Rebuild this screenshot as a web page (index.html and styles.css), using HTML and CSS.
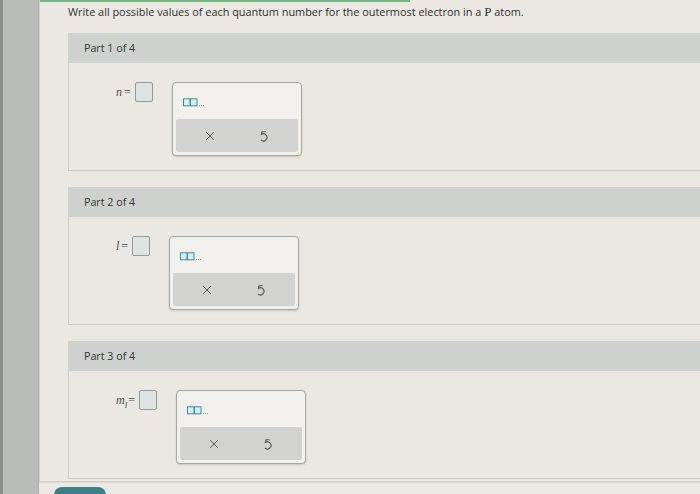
FILE: index.html
```html
<!DOCTYPE html>
<html>
<head>
<meta charset="utf-8">
<link rel="stylesheet" href="styles.css">
</head>
<body>
<div class="screen">
  <div class="sidebar"></div>
  <div class="main">
    <div class="card">
      <div class="topline"></div>
      <p class="question">Write all possible values of each quantum number for the outermost electron in a <span class="atom">P</span> atom.</p>

      <section class="part">
        <div class="part-head">Part 1 of 4</div>
        <div class="part-body">
          <div class="answer-row">
            <span class="label"><i>n</i>=</span>
            <span class="input-box"></span>
            <div class="tool-box">
              <div class="tool-top">
                <svg class="multi-icon" width="26" height="9" viewBox="0 0 26 9"><rect x="0.5" y="0.8" width="6.5" height="7" fill="#d7ecee" stroke="#3f8e98" stroke-width="1"/><rect x="7.5" y="0.8" width="6.5" height="7" fill="#d7ecee" stroke="#3f8e98" stroke-width="1"/><circle cx="16.5" cy="7.6" r="0.6" fill="#7a9aa0"/><circle cx="18.5" cy="7.6" r="0.6" fill="#7a9aa0"/><circle cx="20.5" cy="7.6" r="0.6" fill="#7a9aa0"/></svg>
              </div>
              <div class="tool-actions">
                <svg class="act" width="10" height="10" viewBox="0 0 10 10"><path d="M1.2 1.2 L8.8 8.8 M8.8 1.2 L1.2 8.8" stroke="#555" stroke-width="1" fill="none"/></svg>
                <svg class="act" width="11" height="12" viewBox="0 0 11 12"><path d="M7.6 1.8 H3.9 L3.3 4.6 A3.5 3.5 0 1 1 2.9 9.8" stroke="#555" stroke-width="1.1" fill="none" stroke-linejoin="round"/></svg>
              </div>
            </div>
          </div>
        </div>
      </section>

      <section class="part">
        <div class="part-head">Part 2 of 4</div>
        <div class="part-body">
          <div class="answer-row">
            <span class="label"><i>l</i>=</span>
            <span class="input-box"></span>
            <div class="tool-box">
              <div class="tool-top">
                <svg class="multi-icon" width="26" height="9" viewBox="0 0 26 9"><rect x="0.5" y="0.8" width="6.5" height="7" fill="#d7ecee" stroke="#3f8e98" stroke-width="1"/><rect x="7.5" y="0.8" width="6.5" height="7" fill="#d7ecee" stroke="#3f8e98" stroke-width="1"/><circle cx="16.5" cy="7.6" r="0.6" fill="#7a9aa0"/><circle cx="18.5" cy="7.6" r="0.6" fill="#7a9aa0"/><circle cx="20.5" cy="7.6" r="0.6" fill="#7a9aa0"/></svg>
              </div>
              <div class="tool-actions">
                <svg class="act" width="10" height="10" viewBox="0 0 10 10"><path d="M1.2 1.2 L8.8 8.8 M8.8 1.2 L1.2 8.8" stroke="#555" stroke-width="1" fill="none"/></svg>
                <svg class="act" width="11" height="12" viewBox="0 0 11 12"><path d="M7.6 1.8 H3.9 L3.3 4.6 A3.5 3.5 0 1 1 2.9 9.8" stroke="#555" stroke-width="1.1" fill="none" stroke-linejoin="round"/></svg>
              </div>
            </div>
          </div>
        </div>
      </section>

      <section class="part">
        <div class="part-head">Part 3 of 4</div>
        <div class="part-body">
          <div class="answer-row">
            <span class="label"><i class="base">m</i><sub><i>l</i></sub>=</span>
            <span class="input-box"></span>
            <div class="tool-box">
              <div class="tool-top">
                <svg class="multi-icon" width="26" height="9" viewBox="0 0 26 9"><rect x="0.5" y="0.8" width="6.5" height="7" fill="#d7ecee" stroke="#3f8e98" stroke-width="1"/><rect x="7.5" y="0.8" width="6.5" height="7" fill="#d7ecee" stroke="#3f8e98" stroke-width="1"/><circle cx="16.5" cy="7.6" r="0.6" fill="#7a9aa0"/><circle cx="18.5" cy="7.6" r="0.6" fill="#7a9aa0"/><circle cx="20.5" cy="7.6" r="0.6" fill="#7a9aa0"/></svg>
              </div>
              <div class="tool-actions">
                <svg class="act" width="10" height="10" viewBox="0 0 10 10"><path d="M1.2 1.2 L8.8 8.8 M8.8 1.2 L1.2 8.8" stroke="#555" stroke-width="1" fill="none"/></svg>
                <svg class="act" width="11" height="12" viewBox="0 0 11 12"><path d="M7.6 1.8 H3.9 L3.3 4.6 A3.5 3.5 0 1 1 2.9 9.8" stroke="#555" stroke-width="1.1" fill="none" stroke-linejoin="round"/></svg>
              </div>
            </div>
          </div>
        </div>
      </section>
    </div>
    <div class="footer">
      <div class="teal-btn"></div>
    </div>
  </div>
</div>
</body>
</html>
```

FILE: styles.css
```css
html, body {
  margin: 0;
  padding: 0;
  width: 700px;
  height: 494px;
  overflow: hidden;
  background: #ebe8e3;
  font-family: "Open Sans", "Liberation Sans", sans-serif;
}

.screen {
  display: flex;
  width: 700px;
  height: 494px;
}

.sidebar {
  width: 35px;
  flex: none;
  background: #b9bcb9;
  border-left: 3px solid #8e918e;
  border-right: 1px solid #a9aca9;
}

.main {
  flex: 1;
  display: flex;
  flex-direction: column;
  overflow: hidden;
  background: #ede9e4;
}

.card {
  position: relative;
  height: 482px;
  flex: none;
  padding-left: 28px;
  border-left: 1px solid #d8d5d0;
  border-bottom: 1px solid #d3d0cb;
  background: #ebe8e3;
  box-sizing: border-box;
}

.topline {
  position: absolute;
  left: 0;
  top: 0;
  width: 370px;
  height: 2px;
  background: #74b77e;
}

.question {
  margin: 0;
  padding-top: 5px;
  height: 33px;
  box-sizing: border-box;
  font-size: 10.9px;
  line-height: 14px;
  color: #2e2e2e;
}

.atom {
  font-family: "Liberation Serif", serif;
  font-size: 13px;
}

.part {
  width: 650px;
  margin-bottom: 16px;
}

.part-head {
  height: 30px;
  box-sizing: border-box;
  padding: 8px 0 0 16px;
  background: #cfd1ce;
  font-size: 10.7px;
  color: #333;
}

.part-body {
  height: 108px;
  box-sizing: border-box;
  border: 1px solid #cdcbc6;
  border-top: none;
  padding: 19px 0 0 47px;
  background: #ebe8e3;
}

.answer-row {
  display: flex;
  align-items: flex-start;
}

.label {
  margin-top: 3px;
  font-family: "Liberation Serif", serif;
  font-size: 12px;
  color: #4a4a4a;
  line-height: 14px;
  white-space: nowrap;
}

.label i {
  font-size: 12px;
  margin-right: 2px;
}

.label i.base {
  margin-right: 0;
}

.label sub {
  font-size: 9px;
  vertical-align: -4px;
  line-height: 0;
}

.label sub i {
  font-size: 9px;
  margin-right: 1px;
}

.input-box {
  width: 18px;
  height: 20px;
  margin-left: 4px;
  border: 1px solid #939b99;
  border-radius: 2px;
  background: #dfe3e1;
  box-sizing: border-box;
}

.tool-box {
  width: 130px;
  height: 74px;
  margin-left: 19px;
  box-sizing: border-box;
  border: 1.5px solid #a7a8a5;
  border-radius: 4px;
  background: #f2f0ec;
  box-shadow: 0 1px 2px rgba(0,0,0,0.15);
  display: flex;
  flex-direction: column;
  padding: 0 3px 3px 3px;
}

.tool-top {
  height: 36px;
  padding: 15px 0 0 7px;
  box-sizing: border-box;
}

.multi-icon {
  display: block;
}

.tool-actions {
  flex: 1;
  background: #d2d3d0;
  border-radius: 2px;
  display: flex;
  align-items: center;
  justify-content: space-around;
  padding: 0 8px;
}

.act {
  display: block;
}

.footer {
  flex: 1;
  position: relative;
  background: #ece9e4;
  border-top: 1px solid #dcd9d4;
}

.teal-btn {
  margin: 4px 0 0 15px;
  width: 52px;
  height: 14px;
  border-radius: 8px 8px 0 0;
  background: #3e7e87;
}
```
